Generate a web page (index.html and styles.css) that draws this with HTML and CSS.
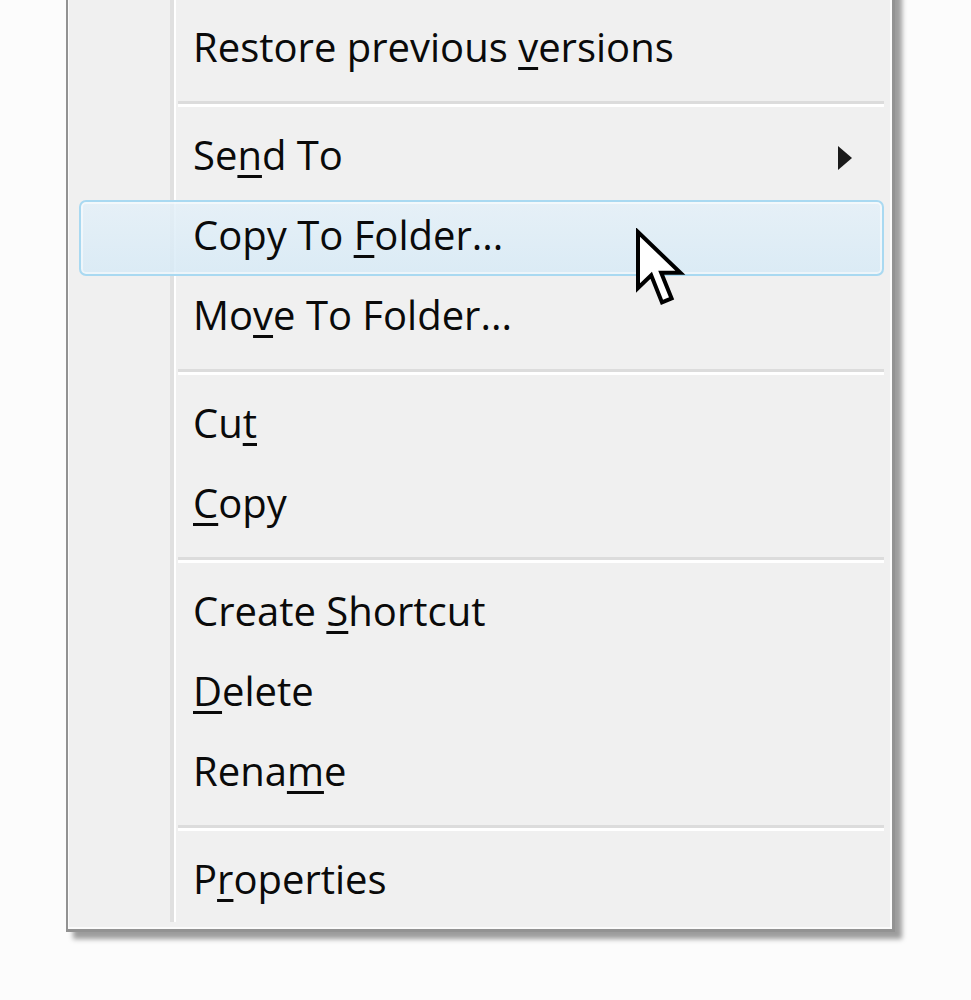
FILE: index.html
```html
<!DOCTYPE html>
<html>
<head>
<meta charset="utf-8">
<link rel="stylesheet" href="styles.css">
</head>
<body>
<div class="menu">
  <div class="inner">
    <ul class="items">
      <li class="item">Restore previous <u>v</u>ersions</li>
      <li class="sep"></li>
      <li class="item">Se<u>n</u>d To<span class="arrow"></span></li>
      <li class="item hot">Copy To <u>F</u>older...</li>
      <li class="item">Mo<u>v</u>e To Folder...</li>
      <li class="sep"></li>
      <li class="item">Cu<u>t</u></li>
      <li class="item"><u>C</u>opy</li>
      <li class="sep"></li>
      <li class="item">Create <u>S</u>hortcut</li>
      <li class="item"><u>D</u>elete</li>
      <li class="item">Rena<u>m</u>e</li>
      <li class="sep"></li>
      <li class="item">P<u>r</u>operties</li>
    </ul>
  </div>
</div>
<svg class="cursor" width="52" height="80" viewBox="-1 -1 13 20">
  <path d="M0 0 L0 14 L3.3 10.8 L6 17.6 L8.4 16.6 L5.8 10.2 L10.6 10.2 Z" fill="#fff" stroke="#000" stroke-width="1" stroke-linejoin="miter"/>
</svg>
</body>
</html>
```
FILE: styles.css
```css
html, body {
  margin: 0;
  padding: 0;
  background: #fcfcfc;
  height: 1000px;
  overflow: hidden;
}
body {
  position: relative;
  font-family: "Open Sans", "Liberation Sans", sans-serif;
}
.menu {
  margin-top: -20px;
  margin-left: 66px;
  width: 829px;
  box-sizing: border-box;
  border: 3px solid #929292;
  border-left-width: 2px;
  background: #f0f0f0;
  box-shadow: 7px 7px 5px rgba(0, 0, 0, 0.38);
}
.inner {
  border: 2px solid #fbfbfb;
  border-left-width: 1px;
  padding: 0 6px 5px 10px;
}
.items {
  list-style: none;
  margin: 0;
  padding: 25px 0 0 0;
  background: linear-gradient(90deg, transparent 91px, #e0e0e0 91px, #e0e0e0 95px, #ffffff 95px, #ffffff 97px, transparent 97px) no-repeat;
}
.item {
  position: relative;
  height: 80px;
  line-height: 74px;
  padding-left: 114px;
  font-size: 40px;
  color: #0a0a0a;
  white-space: nowrap;
}
.item u {
  text-decoration-thickness: 3px;
  text-underline-offset: 5px;
}
.item.hot {
  z-index: 0;
}
.item.hot::before {
  content: "";
  position: absolute;
  z-index: -1;
  left: 0;
  right: 0;
  top: 2px;
  bottom: 2px;
  border: 2px solid #a9d9f1;
  border-radius: 7px;
  box-shadow: inset 0 0 0 2px rgba(255, 255, 255, 0.5);
  background: linear-gradient(180deg, rgba(228, 240, 248, 0.85), rgba(215, 234, 246, 0.85));
}
.sep {
  height: 3px;
  margin: 11px 0 11px 99px;
  background: #dcdcdc;
  border-bottom: 3px solid #ffffff;
}
.arrow {
  position: absolute;
  right: 32px;
  top: 28px;
  width: 0;
  height: 0;
  border-left: 14px solid #1a1a1a;
  border-top: 12px solid transparent;
  border-bottom: 12px solid transparent;
}
.cursor {
  position: absolute;
  left: 634px;
  top: 228px;
}
```
